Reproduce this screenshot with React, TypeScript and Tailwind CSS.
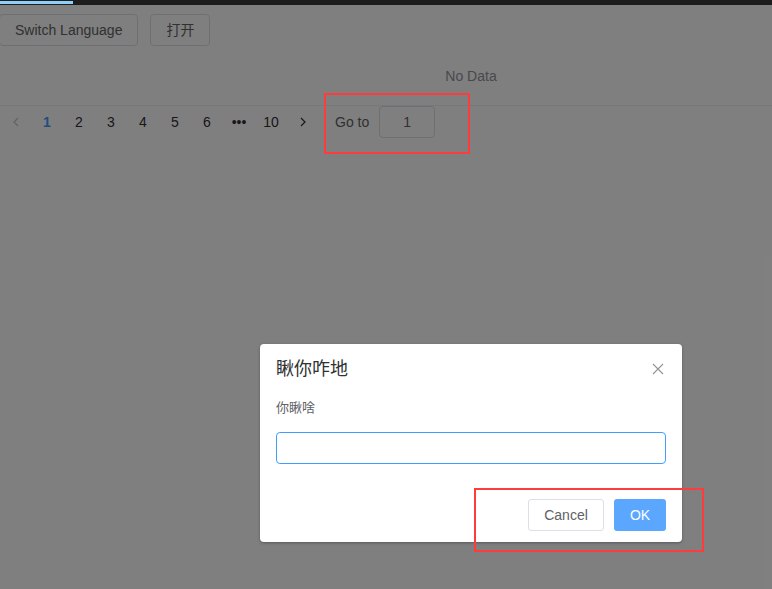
import React from "react";

const font = { fontFamily: '"Liberation Sans", "Noto Sans CJK SC", sans-serif' };

export default function App() {
  const pages = ["1", "2", "3", "4", "5", "6", "•••", "10"];
  return (
    <div className="relative w-[772px] h-[589px] overflow-hidden bg-white" style={font}>
      {/* page content */}
      <div className="pt-[14px]">
        <div className="flex gap-[12px] ml-[-1px]">
          <button className="h-[32px] px-[15px] border border-[#dcdfe6] rounded-[4px] text-[14px] text-[#606266] bg-white">
            Switch Language
          </button>
          <button className="h-[32px] px-[15px] border border-[#dcdfe6] rounded-[4px] text-[14px] text-[#606266] bg-white">
            打开
          </button>
        </div>
        <div className="w-[942px] mt-[1px] h-[59px] border-b border-[#ebeef5] flex items-center justify-center text-[14px] text-[#909399]">
          No Data
        </div>
        <div className="flex items-center h-[32px] text-[14px] text-[#303133] font-bold">
          <div className="w-[31px] flex justify-center text-[#c0c4cc]">
            <svg width="10" height="10" viewBox="0 0 10 10"><path d="M7 1 L3 5 L7 9" fill="none" stroke="currentColor" strokeWidth="1.2" /></svg>
          </div>
          {pages.map((p, i) => (
            <div
              key={p}
              className={`w-[32px] text-center ${i === 0 ? "text-[#409eff]" : "font-normal"}`}
            >
              {p}
            </div>
          ))}
          <div className="w-[32px] flex justify-center text-[#303133]">
            <svg width="10" height="10" viewBox="0 0 10 10"><path d="M3 1 L7 5 L3 9" fill="none" stroke="currentColor" strokeWidth="1.2" /></svg>
          </div>
          <div className="ml-[16px] flex items-center font-normal text-[#606266]">
            <span>Go to</span>
            <div className="ml-[10px] w-[56px] h-[32px] border border-[#dcdfe6] rounded-[4px] flex items-center justify-center text-[#606266]">
              1
            </div>
          </div>
        </div>
      </div>

      {/* overlay */}
      <div className="absolute inset-0 bg-black/50" />

      {/* top progress bar */}
      <div className="absolute left-0 top-0 w-full h-[5px] bg-[#1d1d1d]">
        <div className="mt-[1px] h-[3px] w-[73px] bg-[#8fd0f7]" />
      </div>

      {/* dialog */}
      <div className="absolute left-[260px] top-[344px] w-[422px] h-[198px] bg-white rounded-[4px] shadow-[0_1px_3px_rgba(0,0,0,0.3)] px-[16px] pt-[13px]">
        <div className="flex items-center justify-between h-[24px]">
          <span className="text-[18px] leading-[24px] text-[#303133]">瞅你咋地</span>
          <svg width="12" height="12" viewBox="0 0 12 12" className="mr-[2px] text-[#909399]">
            <path d="M1 1 L11 11 M11 1 L1 11" stroke="currentColor" strokeWidth="1.1" />
          </svg>
        </div>
        <div className="mt-[17px] text-[13px] leading-[20px] text-[#606266]">你瞅啥</div>
        <div className="mt-[14px] h-[32px] border border-[#409eff] rounded-[4px]" />
        <div className="mt-[35px] flex justify-end gap-[10px]">
          <button className="h-[32px] w-[76px] border border-[#dcdfe6] rounded-[3px] text-[14px] text-[#606266] bg-white">
            Cancel
          </button>
          <button className="h-[32px] w-[52px] rounded-[3px] text-[14px] text-white bg-[#5ba7ff]">
            OK
          </button>
        </div>
      </div>

      {/* annotation boxes */}
      <div className="absolute left-[324px] top-[93px] w-[146px] h-[61px] border-2 border-[#ff3b3b]" />
      <div className="absolute left-[474px] top-[488px] w-[230px] h-[64px] border-2 border-[#ff3b3b]" />
    </div>
  );
}
